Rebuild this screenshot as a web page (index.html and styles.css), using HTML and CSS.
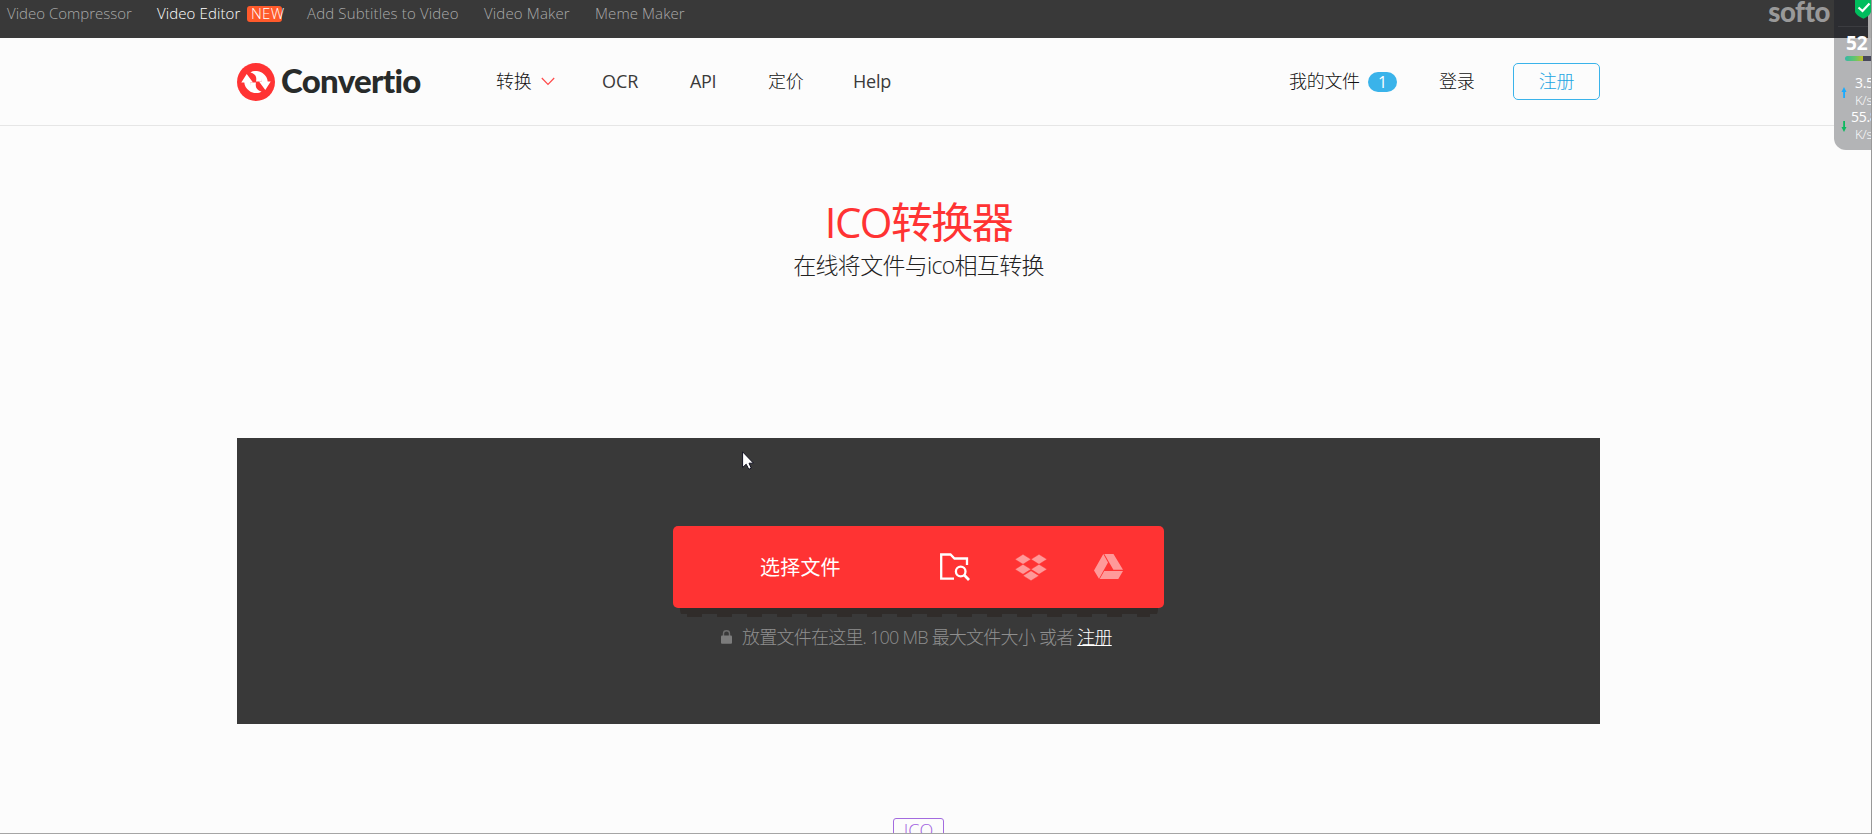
FILE: index.html
```html
<!DOCTYPE html>
<html lang="zh-CN">
<head>
<meta charset="utf-8">
<title>ICO转换器 — Convertio</title>
<link rel="stylesheet" href="styles.css">
</head>
<body>
<div class="topbar">
  <a class="t1">Video Compressor</a>
  <a class="t2 on">Video Editor</a>
  <span class="new">NEW</span>
  <a class="t3">Add Subtitles to Video</a>
  <a class="t4">Video Maker</a>
  <a class="t5">Meme Maker</a>
  <span class="softo">softo</span>
</div>
<header class="header">
  <div class="wrap">
    <svg class="mark" viewBox="0 0 38 38" width="38" height="38"><circle cx="19" cy="19" r="19" fill="#ff3333"/><path fill="#fff" d="M4.300 19.500L9.700 11L16 19.500H13.200C13.500 24 17 28.500 24.500 28.800C21 30.700 16 30.500 12.500 28C9 25.500 7.500 22.500 7.300 19.500Z"/><path fill="#fff" d="M33.700 18.500L28.300 27L22 18.500H24.800C24.500 14 21 9.500 13.500 9.200C17 7.300 22 7.500 25.500 10C29 12.500 30.500 15.500 30.700 18.500Z"/><path fill="#fff" d="M13.500 9.200C18.500 11 20 14 19 18.500H24.800L25 10L19 8ZM24.500 28.800C19.500 27 18 24 19 19.500H13.200L13 28L19 30Z"/></svg>
    <span class="brand">Convertio</span>
    <nav class="nav">
      <a class="conv">转换</a>
      <svg class="chev" viewBox="0 0 14 9" width="14" height="9"><path d="M.8 1L7 7.500L13.200 1" fill="none" stroke="#ff4a4a" stroke-width="1.200"/></svg>
      <a class="ocr">OCR</a><a class="api">API</a><a class="price">定价</a><a class="help">Help</a>
    </nav>
    <div class="account">
      <a class="files">我的文件</a><span class="count">1</span><a class="login">登录</a><a class="signup">注册</a>
    </div>
  </div>
</header>
<main>
  <h1>ICO转换器</h1>
  <p class="sub">在线将文件与ico相互转换</p>
  <section class="drop">
    <div class="picker">
      <span class="choose">选择文件</span>
      <svg class="i-folder" viewBox="0 0 30 28" width="30" height="28" fill="none" stroke="#fff" stroke-width="2.300"><path d="M14 25.700H1.200V1.500H10.500L14.500 5.500H27V12"/><circle cx="20.700" cy="18.500" r="4.800"/><path d="M24.200 22L29 27" stroke-width="2.700"/></svg>
      <svg class="i-box" viewBox="0 0 32 27" width="32" height="27" fill="#ff9999"><path d="M8 .3L16 5.300L8 10.300L0 5.300ZM24 .3L32 5.300L24 10.300L16 5.300ZM8 10.300L16 15.300L8 20.300L0 15.300ZM24 10.300L32 15.300L24 20.300L16 15.300ZM16 16.700L24 21.700L16 26.700L8 21.700Z" stroke="#ff3333" stroke-width=".5"/></svg>
      <svg class="i-drive" viewBox="0 0 29 25" width="29" height="25" fill="#ff9999"><path d="M9.300 0L14 8.500L5 24.800L0 16.500ZM10.300 0H19.500L29 15.700H19.400ZM10.200 17H29L24.300 25H5.700Z"/></svg>
    </div>
    <div class="shade"></div>
    <div class="hint">
      <svg class="lock" viewBox="0 0 11 14" width="11" height="14"><path d="M2.500 6V3.500a3 2.700 0 0 1 6 0V6" fill="none" stroke="#6e6e6e" stroke-width="1.400"/><rect y="5.500" width="11" height="8.200" rx="1" fill="#7c7c7c"/></svg>
      <span class="note">放置文件在这里. 100 MB 最大文件大小 或者 <a>注册</a></span>
    </div>
  </section>
  <div class="tag">ICO</div>
</main>
<aside class="meter">
  <svg class="shield" viewBox="0 0 16 19" width="16" height="19"><path fill="#00bd5d" d="M0 0H16V12Q14.500 16 8.500 18.700Q2 16 0 12Z"/><path d="M3.500 7.500L7.500 11L14.500 3.500" fill="none" stroke="#fff" stroke-width="2.200"/></svg>
  <div class="rule"></div>
  <div class="load">52</div>
  <div class="bar"></div>
  <div class="row up"><svg viewBox="0 0 6 11" width="6" height="11"><path fill="#1aabff" d="M3 0L5.500 5H4V11H2.200V5H.5Z"/></svg><span>3.5<br><small>K/s</small></span></div>
  <div class="row down"><svg viewBox="0 0 6 11" width="6" height="11"><path fill="#0db960" d="M3 11L5.500 6H4V0H2.200V6H.5Z"/></svg><span>55.8<br><small>K/s</small></span></div>
</aside>
<svg class="cursor" viewBox="0 0 12 19" width="12" height="19"><path d="M.6.800V16.500L4.200 13.200L6.800 18.300L9.300 17.200L7 12.200H11.500Z" fill="#fff" stroke="#111120"/></svg>
<div class="edge-b"></div><div class="edge-r"></div>
</body>
</html>
```
FILE: styles.css
```css
* { box-sizing: border-box; }
body { margin: 0; height: 834px; overflow: hidden; position: relative; background: #fcfcfc; font-family: "Open Sans", "Noto Sans CJK SC", sans-serif; font-weight: 300; color: #222; }
a, span { white-space: nowrap; }
.topbar { height: 38px; background: #393939; color: #aaa; font-size: 15px; line-height: 26px; display: flex; padding-left: 7px; }
.topbar a { flex: none; }
.t1 { width: 150px; }
.t2 { width: 90px; letter-spacing: .1px; }
.topbar .on { color: #fff; }
.new { flex: none; width: 35px; height: 16px; margin-top: 6px; padding-left: 4px; border-radius: 3px; background: #ff5a2b; color: #fff; font-size: 15px; line-height: 15px; letter-spacing: .3px; }
.t3 { margin-left: 25px; width: 177px; letter-spacing: .15px; }
.t4 { width: 111px; letter-spacing: .15px; }
.t5 { letter-spacing: .1px; }
.softo { margin-left: auto; margin-right: 42px; font: 900 27.500px/24px Lato, sans-serif; color: #999; letter-spacing: -.4px; }
.header { height: 88px; border-bottom: 1px solid #e6e6e6; }
.wrap { width: 1363px; height: 86px; margin-left: 237px; display: flex; align-items: center; font-size: 18px; color: #111; }
.mark { flex: none; margin-top: 1px; }
.brand { margin: -2px 0 0 6px; width: 215px; font: 900 33px/38px Lato, sans-serif; color: #282b2a; letter-spacing: -.7px; }
.nav { display: flex; align-items: center; line-height: 30px; margin-top: -1px; }
.nav a, .account a { flex: none; }
.conv { width: 45px; letter-spacing: -.2px; }
.chev { margin: 2px 47px 0 0; }
.nav .ocr, .nav .api, .nav .help { font-weight: 400; font-size: 18px; color: #3a3a3a; }
.ocr { width: 88px; letter-spacing: -.1px; }
.api { width: 78px; letter-spacing: -.3px; }
.price { width: 85px; letter-spacing: -.2px; }
.help { letter-spacing: -.2px; }
.account { margin-left: auto; display: flex; align-items: center; line-height: 30px; letter-spacing: -.3px; }
.count { width: 29px; height: 20px; margin: 1px 42px 0 9px; border-radius: 10px; background: #3ab3ea; color: #fff; font-size: 16px; font-weight: 400; line-height: 20px; text-align: center; }
.files { width: 70px; }
.account .login { width: 74px; }
.account .signup { width: 87px; height: 37px; border: 1px solid #3ab3ea; border-radius: 5px; color: #22a5e2; line-height: 34px; text-align: center; }
main { display: flex; flex-direction: column; width: 1363px; margin-left: 237px; align-items: center; }
h1 { margin: 67px 0 0; height: 58px; font-size: 42px; line-height: 58px; font-weight: 400; color: #ff3333; letter-spacing: -1.600px; }
.sub { margin: 0; height: 28px; font-size: 23px; line-height: 28px; letter-spacing: -.7px; }
.drop { width: 1363px; height: 286px; margin-top: 159px; padding-top: 88px; background: #393939; display: flex; flex-direction: column; align-items: center; }
.picker { width: 491px; height: 82px; border-radius: 5px; background: #ff3333; display: flex; align-items: center; flex: none; }
.picker svg { flex: none; }
.choose { flex: none; margin: -2px 0 0 87px; width: 180px; color: #fff; font-size: 20px; font-weight: 400; letter-spacing: .2px; }
.i-box { margin-left: 45px; }
.i-drive { margin: -1px 0 0 47px; }
.shade { width: 478px; height: 9px; flex: none; background: linear-gradient(#302c2a, #302c2a) 0 0 / 100% 6px no-repeat, repeating-linear-gradient(90deg, #302c2a 0 15px, #393939 15px 30px) 7px 6px / 463px 3px no-repeat; border-radius: 0 0 7px 7px; }
.hint { display: flex; align-items: center; width: 395px; margin-top: 3px; height: 34px; color: #8f8f8f; font-size: 18px; line-height: 34px; }
.lock { flex: none; }
.note { margin-left: 10px; letter-spacing: -.77px; }
.note a { color: #fff; text-decoration: underline; }
.tag { width: 51px; height: 40px; margin-top: 94px; border: 1px solid #a36bdf; border-radius: 3px; color: #a05fe0; font-size: 18px; line-height: 23px; text-align: center; }
.meter { position: absolute; left: 1834px; top: 0; width: 38px; height: 150px; border-radius: 0 0 0 12px; background: linear-gradient(#aaa, #aaa) 34px 0 / 3px 38px no-repeat, linear-gradient(#2c2d31 0 38px, #b3b4b6 38px); overflow: hidden; color: #fff; }
.shield { display: block; margin-left: 21px; }
.rule { height: 1px; width: 30px; margin: 7px 0 0 4px; background: #3b3c40; }
.load { margin: 5px 0 0 12px; font: 700 19px/22px "Open Sans", sans-serif; }
.bar { height: 5px; margin: 2px 0 0 11px; border-radius: 3px 0 0 3px; background: linear-gradient(90deg, #35b7a7, #63c66b 10px, #c0bd28 18px, #47485a 18px); }
.row { display: flex; align-items: center; height: 34px; font-size: 14px; line-height: 17px; }
.up { margin-top: 13px; }
.row svg { flex: none; margin: 3px 0 0 7px; width: 6px; }
.row span { margin-left: 8px; font-weight: 400; letter-spacing: -.3px; }
.down span { margin-left: 4px; }
.row small { font-size: 13px; font-weight: 300; }
.down small { margin-left: 4px; }
.cursor { position: absolute; left: 742px; top: 451px; }
.edge-b { position: absolute; left: 0; right: 0; bottom: 0; height: 1px; background: #a5a5a5; }
.edge-r { position: absolute; right: 0; top: 0; bottom: 0; width: 1px; background: #999; }
```
